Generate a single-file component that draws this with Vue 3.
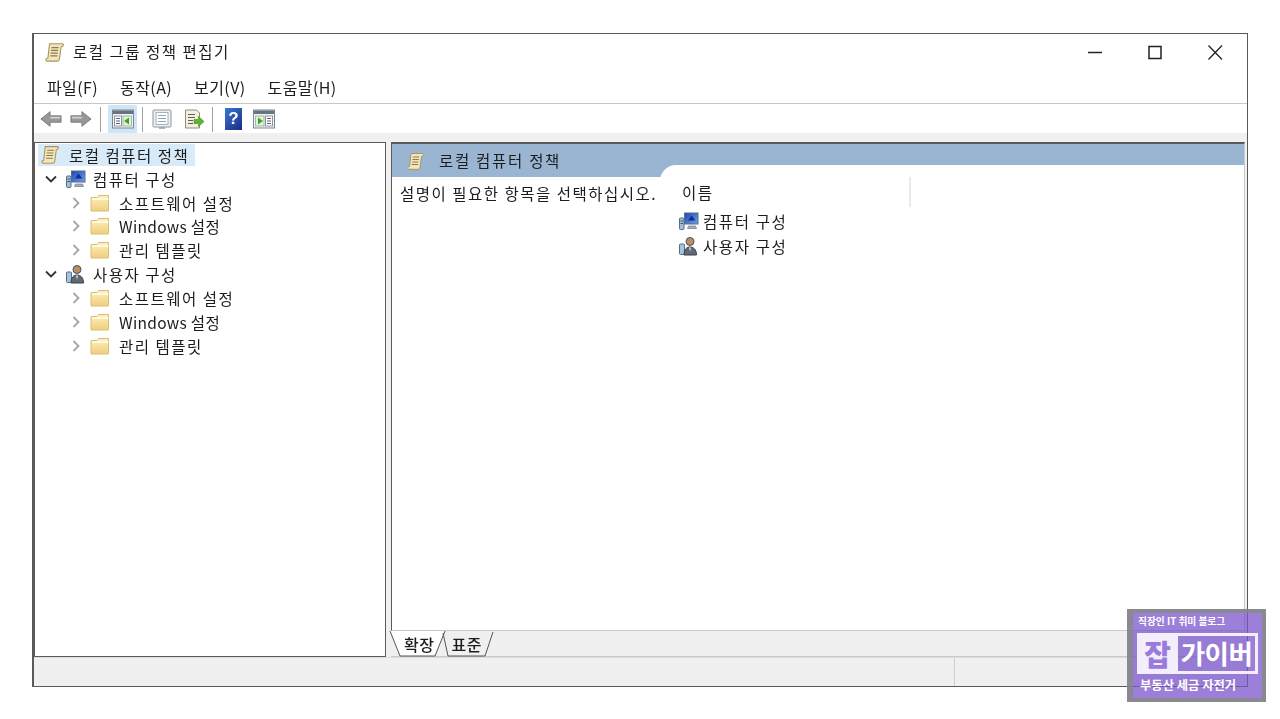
<script setup>
const menus = ['파일(F)', '동작(A)', '보기(V)', '도움말(H)']
const groups = [
  { icon: 'computer', label: '컴퓨터 구성' },
  { icon: 'user', label: '사용자 구성' }
]
const children = [
  { label: '소프트웨어 설정', latin: false },
  { label: 'Windows 설정', latin: true },
  { label: '관리 템플릿', latin: false }
]
</script>

<template>
  <div class="page">
    <svg class="defs" width="0" height="0" aria-hidden="true">
      <defs>
        <linearGradient id="folderFill" x1="0" y1="0" x2="0" y2="1">
          <stop offset="0" stop-color="#fdf0c0" />
          <stop offset="1" stop-color="#f0cf7c" />
        </linearGradient>
        <linearGradient id="screenFill" x1="0" y1="0" x2="1" y2="1">
          <stop offset="0" stop-color="#1b46b8" />
          <stop offset="1" stop-color="#6ea4e8" />
        </linearGradient>
        <symbol id="scroll" viewBox="0 0 20 20">
          <path d="M5 2.500h11.500c1.200 0 1.500 1.400.6 2.200L15.500 5.500 14 16.500c-.2 1.200-1 1.800-2 1.800H3c-1.400 0-1.800-1.700-.6-2.300l1.200-.6L5 2.500z" fill="#f3e6bd" stroke="#a8935e" stroke-width="1" />
          <path d="M6.800 6h6.400M6.400 8.500h6.400M6.100 11h6.400M5.800 13.500h6.400" stroke="#8b7a50" stroke-width="1" fill="none" />
        </symbol>
        <symbol id="folder" viewBox="0 0 20 20">
          <path d="M1 4.500h6l1.500-2h10v15.500H1z" fill="url(#folderFill)" stroke="#dcbd74" stroke-width="1" />
          <path d="M2 6h16.500" stroke="#fffbe6" stroke-width="1.800" fill="none" />
        </symbol>
        <symbol id="computer" viewBox="0 0 20 20">
          <rect x="6" y="2" width="13.500" height="11" fill="url(#screenFill)" stroke="#5f6b80" />
          <path d="M9.500 9.500 13 4.500l4 5z" fill="#0d2f96" />
          <path d="M10 15h7l1 2.500H9z" fill="#a7afba" stroke="#717a86" stroke-width=".7" />
          <rect x="1" y="7" width="4.500" height="11.500" rx="1" fill="#a9bdd0" stroke="#4f6f90" />
          <path d="M2 10h2.500M2 12.500h2.500" stroke="#375b80" stroke-width="1" />
        </symbol>
        <symbol id="user" viewBox="0 0 20 20">
          <rect x="1" y="8" width="5" height="10.500" rx="1" fill="#a9c3da" stroke="#4f6f90" />
          <circle cx="11.500" cy="5.500" r="4" fill="#b98e68" stroke="#4e5156" />
          <path d="M5.500 19c0-5.500 2.500-8 6-8s6.500 2.500 6.500 8z" fill="#5f6a76" stroke="#3a4047" />
          <path d="M10.500 11.500h2l-1 4z" fill="#dfe5ea" />
        </symbol>
        <symbol id="arrowLeft" viewBox="0 0 24 20">
          <path d="M1 10 11 2v4.500h12v7H11V18z" fill="#989898" stroke="#787878" stroke-width="1" />
          <path d="M11 8.500h11" stroke="#cfcfcf" stroke-width="2" fill="none" />
        </symbol>
        <symbol id="paneLeft" viewBox="0 0 22 20">
          <rect x=".5" y="1" width="21" height="18" fill="#f4f4f4" stroke="#7d8791" />
          <rect x="1" y="1.500" width="20" height="3.500" fill="#66747f" />
          <rect x="2.500" y="7" width="7" height="10" fill="#fff" stroke="#8b96a0" />
          <path d="M4 9.500h4M4 12h4M4 14.500h4" stroke="#56626e" />
          <rect x="11" y="7" width="8.500" height="10" fill="#dff2da" stroke="#a4b8a5" />
          <path d="M17 8.500v7l-5-3.500z" fill="#3fa32b" />
        </symbol>
        <symbol id="paneRight" viewBox="0 0 22 20">
          <rect x=".5" y="1" width="21" height="18" fill="#f4f4f4" stroke="#7d8791" />
          <rect x="1" y="1.500" width="20" height="3.500" fill="#66747f" />
          <rect x="2.500" y="7" width="8.500" height="10" fill="#dff2da" stroke="#a4b8a5" />
          <path d="M5 8.500v7l5-3.500z" fill="#3fa32b" />
          <rect x="12.500" y="7" width="7" height="10" fill="#fff" stroke="#8b96a0" />
          <path d="M14 9.500h4M14 12h4M14 14.500h4" stroke="#56626e" />
        </symbol>
      </defs>
    </svg>

    <div class="window">
      <header class="titlebar">
        <svg class="title-icon"><use href="#scroll" /></svg>
        <span class="title-text">로컬 그룹 정책 편집기</span>
        <div class="controls">
          <svg class="control" viewBox="0 0 60 36"><path d="M23 18.500h14" stroke="#222" stroke-width="1.500" /></svg>
          <svg class="control" viewBox="0 0 60 36"><rect x="24" y="12.500" width="12" height="12" fill="none" stroke="#222" stroke-width="1.500" /></svg>
          <svg class="control" viewBox="0 0 60 36"><path d="M23.500 11.500l13.500 14M37 11.500l-13.500 14" stroke="#222" stroke-width="1.300" fill="none" /></svg>
        </div>
      </header>

      <nav class="menubar">
        <span v-for="m in menus" :key="m" class="menu-item">{{ m }}</span>
      </nav>

      <div class="toolbar">
        <svg class="tool arrow"><use href="#arrowLeft" /></svg>
        <svg class="tool arrow flip"><use href="#arrowLeft" /></svg>
        <i class="sep first"></i>
        <span class="tool-active">
          <svg class="tool"><use href="#paneLeft" /></svg>
        </span>
        <i class="sep"></i>
        <svg class="tool doc" viewBox="0 0 20 20">
          <rect x="1" y="1" width="18" height="17" rx="1" fill="#eef1f3" stroke="#8b959f" />
          <rect x="4" y="3.500" width="12" height="12" fill="#fff" stroke="#a9b2bb" />
          <path d="M6 6.500h8M6 9.500h8M6 12.500h8" stroke="#9aa5af" />
          <path d="M7 19h6" stroke="#6fa7d8" stroke-width="1.500" />
        </svg>
        <svg class="tool doc export" viewBox="0 0 20 20">
          <path d="M1.500 1h11l3 3v15h-14z" fill="#f4efd9" stroke="#8f8d80" />
          <path d="M4 5.500h7M4 8.500h7M4 11.500h5M4 14.500h5" stroke="#58616a" />
          <path d="M10 10.500h4.500V7.500l5.500 5-5.500 5v-3H10z" fill="#5cb531" stroke="#3f8d1f" stroke-width=".6" />
        </svg>
        <i class="sep help-sep"></i>
        <span class="help">?</span>
        <svg class="tool"><use href="#paneRight" /></svg>
      </div>

      <div class="band"></div>

      <main class="panes">
        <section class="tree">
          <div class="row root">
            <span class="root-label">
              <svg class="root-icon"><use href="#scroll" /></svg>
              <span>로컬 컴퓨터 정책</span>
            </span>
          </div>
          <template v-for="g in groups" :key="g.label">
            <div class="row group">
              <svg class="chev" viewBox="0 0 12 12"><path d="M1 3.500 6 8.500l5-5" fill="none" stroke="#333" stroke-width="1.800" /></svg>
              <svg class="node-icon"><use :href="'#' + g.icon" /></svg>
              <span>{{ g.label }}</span>
            </div>
            <div v-for="c in children" :key="c.label" class="row child" :class="{ latin: c.latin }">
              <svg class="chev" viewBox="0 0 12 12"><path d="M3.500 1 8.500 6l-5 5" fill="none" stroke="#a6a6a6" stroke-width="1.800" /></svg>
              <svg class="folder"><use href="#folder" /></svg>
              <span>{{ c.label }}</span>
            </div>
          </template>
        </section>

        <section class="detail">
          <div class="detail-frame">
            <div class="detail-head">
              <svg class="head-icon"><use href="#scroll" /></svg>
              <span>로컬 컴퓨터 정책</span>
            </div>
            <div class="detail-body">
              <p class="desc">설명이 필요한 항목을 선택하십시오.</p>
              <div class="list">
                <div class="list-head"><span class="col-name">이름</span></div>
                <div v-for="g in groups" :key="g.label" class="list-row">
                  <svg class="node-icon"><use :href="'#' + g.icon" /></svg>
                  <span>{{ g.label }}</span>
                </div>
              </div>
            </div>
          </div>
          <div class="tabs">
            <svg class="tab-lines" viewBox="0 0 120 26" width="120" height="26">
              <path d="M2 0 12 25H47L57 0z" fill="#fff" />
              <path d="M2 0 12 25H47L57 0" fill="none" stroke="#555" />
              <path d="M55 2 60 25H97L105 1" fill="none" stroke="#555" />
            </svg>
            <span class="tab">확장</span>
            <span class="tab">표준</span>
          </div>
        </section>
      </main>

      <footer class="statusbar">
        <i class="status-sep"></i>
      </footer>
    </div>

    <aside class="badge">
      <div class="badge-top">직장인 IT 취미 블로그</div>
      <div class="badge-box">
        <span class="badge-mark">잡</span>
        <span class="badge-name">가이버</span>
      </div>
      <div class="badge-bottom">부동산 세금 자전거</div>
    </aside>
  </div>
</template>

<style>
html, body { margin: 0; background: #fff; }
</style>

<style scoped>
.page {
  position: relative;
  width: 1280px;
  height: 719px;
  padding: 33px 0 0 32px;
  box-sizing: border-box;
  overflow: hidden;
  background: #fff;
  font-family: "Noto Sans CJK KR", "Noto Sans", sans-serif;
  color: #1c1c1c;
}
.defs { position: absolute; }
svg { display: block; flex: none; }

.window {
  width: 1216px;
  height: 654px;
  box-sizing: border-box;
  border: 1px solid #5a5a5a;
  border-left-width: 2px;
  display: flex;
  flex-direction: column;
  background: #fff;
  filter: blur(.3px);
}

.titlebar {
  height: 36px;
  flex: none;
  display: flex;
  align-items: center;
  padding-left: 10px;
}
.title-icon { width: 22px; height: 22px; }
.title-text { margin-left: 7px; font-size: 15.500px; letter-spacing: 1.500px; position: relative; top: -1px; }
.controls { margin-left: auto; display: flex; margin-right: 2px; }
.control { width: 60px; height: 36px; }

.menubar {
  height: 33px;
  flex: none;
  display: flex;
  align-items: center;
  padding-left: 13px;
  gap: 22px;
  font-size: 16px;
  letter-spacing: .4px;
}

.toolbar {
  height: 30px;
  flex: none;
  border-top: 1px solid #c8c8c8;
  display: flex;
  align-items: center;
  padding: 1px 0 0 6px;
  box-sizing: border-box;
}
.tool { width: 22px; height: 20px; }
.arrow { margin-right: 8px; }
.flip { transform: scaleX(-1); }
.sep { width: 1px; height: 25px; background: #a0a0a0; flex: none; margin: 0 7px 0 0; }
.tool-active {
  width: 29px;
  height: 29px;
  background: #cfe6f7;
  display: flex;
  align-items: center;
  justify-content: center;
  margin-right: 5px;
}
.tool-active + .sep { margin-right: 6px; }
.doc { width: 20px; margin-left: 3px; margin-right: 8px; }
.export { margin-left: 4px; }
.help-sep { margin-right: 12px; }
.help {
  width: 17px;
  height: 22px;
  background: linear-gradient(135deg, #3a78d8, #1b2a80);
  color: #fff;
  font: bold 17px/22px "Liberation Sans", sans-serif;
  text-align: center;
  margin-right: 11px;
}

.band { height: 9px; flex: none; background: #f0f0f0; }

.panes {
  flex: 1;
  min-height: 0;
  display: flex;
  background: #f0f0f0;
}

.tree {
  width: 352px;
  flex: none;
  box-sizing: border-box;
  border: 1px solid #5a5a5a;
  background: #fff;
  font-size: 15.500px;
  letter-spacing: 1.500px;
}
.row { height: 23.850px; display: flex; align-items: center; white-space: nowrap; }
.root { padding-left: 3px; }
.root-label {
  display: flex;
  align-items: center;
  background: #d9ebf9;
  width: 157px;
  height: 22px;
  padding-left: 2px;
  box-sizing: border-box;
}
.root-icon { width: 21px; height: 21px; margin-right: 8px; }
.chev { width: 12px; height: 12px; }
.group { padding-left: 10px; }
.group .node-icon { margin-left: 8px; margin-right: 7px; }
.child { padding-left: 35px; }
.child.latin { letter-spacing: .3px; }
.folder { width: 20px; height: 20px; margin-left: 8px; margin-right: 9px; }
.node-icon { width: 21px; height: 20px; }

.detail {
  flex: 1;
  min-width: 0;
  margin-left: 5px;
  display: flex;
  flex-direction: column;
}
.detail-frame {
  flex: 1;
  min-height: 0;
  border-top: 2px solid #5a5a5a;
  border-left: 1px solid #5a5a5a;
  border-right: 1px solid #c9c9c9;
  border-bottom: 1px solid #c9c9c9;
  margin-right: 2px;
  background: #fff;
  display: flex;
  flex-direction: column;
}
.detail-head {
  height: 33px;
  flex: none;
  background: #9ab5d2;
  display: flex;
  align-items: flex-start;
  padding: 4px 0 0 14px;
  box-sizing: border-box;
  font-size: 15.500px;
  letter-spacing: 1.700px;
  line-height: 24px;
}
.head-icon { width: 20px; height: 20px; margin: 3px 13px 0 0; }
.detail-body { flex: 1; display: flex; min-height: 0; }
.desc {
  width: 268px;
  flex: none;
  margin: 0;
  padding: 4px 0 0 8px;
  box-sizing: border-box;
  font-size: 15.500px;
  letter-spacing: 1.500px;
  white-space: nowrap;
  line-height: 24px;
}
.list {
  flex: 1;
  margin-top: -12px;
  background: #fff;
  border-top-left-radius: 16px;
  padding-top: 12px;
  font-size: 15.500px;
  letter-spacing: 1.600px;
  position: relative;
}
.list-head {
  height: 30px;
  display: flex;
  align-items: center;
}
.col-name {
  width: 251px;
  height: 30px;
  padding-left: 22px;
  box-sizing: border-box;
  line-height: 30px;
  border-right: 2px solid #eaeaea;
  display: block;
}
.list-row {
  height: 25px;
  display: flex;
  align-items: center;
  padding-left: 18px;
  gap: 4px;
}
.list-head + .list-row { margin-top: 1px; }

.tabs {
  position: relative;
  height: 26px;
  flex: none;
  display: flex;
  padding-left: 13px;
  gap: 17px;
  align-items: center;
  font-size: 16px;
  font-weight: 500;
  letter-spacing: .5px;
  border-bottom: 1px solid #c9c9c9;
  box-sizing: border-box;
}
.tab-lines { position: absolute; left: -3px; top: 0; }
.tab { position: relative; }

.statusbar {
  height: 29px;
  flex: none;
  background: #f0f0f0;
  border-top: 1px solid #dcdcdc;
  box-sizing: border-box;
  display: flex;
  justify-content: flex-end;
}
.status-sep { width: 1px; background: #d0d0d0; margin-right: 292px; }

.badge {
  position: absolute;
  left: 1127px;
  top: 609px;
  width: 139px;
  height: 93px;
  box-sizing: border-box;
  border: solid rgba(132, 130, 138, .95);
  border-width: 4px 4px 4px 6px;
  background: rgba(121, 84, 203, .75);
  background-clip: padding-box;
  color: #fff;
  font-weight: 700;
  display: flex;
  flex-direction: column;
  padding-left: 4px;
}
.badge-top { height: 20px; font-size: 9.700px; line-height: 17px; padding-left: 1px; white-space: nowrap; }
.badge-box {
  display: flex;
  width: 121px;
  height: 41px;
  flex: none;
  box-sizing: border-box;
  border: 3px solid #f3eefb;
  border-left-width: 0;
}
.badge-mark {
  width: 41px;
  flex: none;
  background: #f3eefb;
  color: #9a7bdc;
  text-align: center;
  font-size: 29px;
  font-weight: 900;
  line-height: 35px;
}
.badge-name { flex: 1; text-align: center; font-size: 26.500px; line-height: 33px; white-space: nowrap; letter-spacing: -.5px; }
.badge-bottom { font-size: 12.300px; line-height: 23px; padding-left: 3px; white-space: nowrap; }
</style>
